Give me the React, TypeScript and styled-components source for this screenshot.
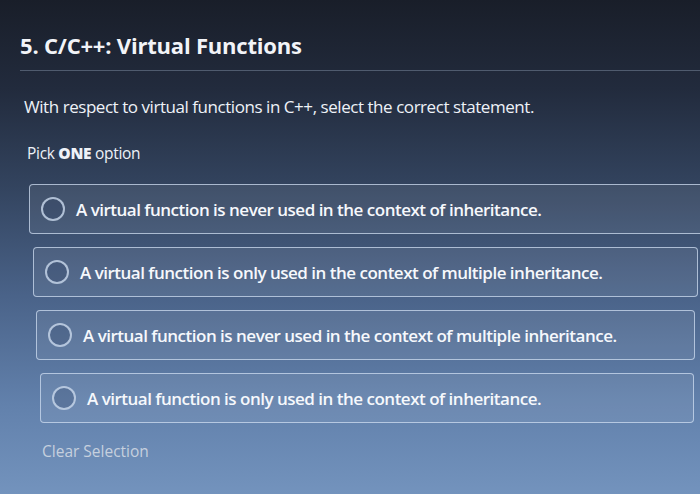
import { FC } from "react";
import styled, { createGlobalStyle } from "styled-components";

const GlobalStyle = createGlobalStyle`
  html, body {
    margin: 0;
    padding: 0;
    background: #1b202c;
  }
`;

interface IOption {
  text: string;
  left: number;
  right: number;
}

const options: IOption[] = [
  { text: "A virtual function is never used in the context of inheritance.", left: 29, right: -4 },
  { text: "A virtual function is only used in the context of multiple inheritance.", left: 33, right: 2 },
  { text: "A virtual function is never used in the context of multiple inheritance.", left: 36, right: 5 },
  { text: "A virtual function is only used in the context of inheritance.", left: 40, right: 6 },
];

export const App: FC = () => {
  return (
    <>
      <GlobalStyle />
      <ScreenDiv>
        <TitleH2>5. C/C++: Virtual Functions</TitleH2>
        <DividerDiv />
        <QuestionP>
          With respect to virtual functions in C++, select the correct statement.
        </QuestionP>
        <PickP>
          Pick <b>ONE</b> option
        </PickP>
        <OptionsDiv>
          {options.map((option) => (
            <OptionLabel key={option.text} $left={option.left} $right={option.right}>
              <RadioSpan />
              <span>{option.text}</span>
            </OptionLabel>
          ))}
        </OptionsDiv>
        <ClearDiv>Clear Selection</ClearDiv>
      </ScreenDiv>
    </>
  );
};

export default App;

const ScreenDiv = styled.div`
  width: 700px;
  height: 494px;
  overflow: hidden;
  box-sizing: border-box;
  padding-top: 30px;
  font-family: "Open Sans", "Noto Sans", sans-serif;
  color: #f4f6fa;
  background: linear-gradient(
    180deg,
    #191e29 0%,
    #222b3d 18%,
    #33445f 38%,
    #4a6389 60%,
    #6281ac 82%,
    #7393bd 100%
  );
`;

const TitleH2 = styled.h2`
  margin: 0 0 0 20px;
  font-size: 22px;
  font-weight: 700;
  letter-spacing: -0.2px;
  line-height: 30px;
  color: #f2f4f8;
`;

const DividerDiv = styled.div`
  height: 1px;
  margin: 10px 0 0 20px;
  background: rgba(170, 185, 210, 0.35);
`;

const QuestionP = styled.p`
  margin: 25px 0 0 24px;
  font-size: 17px;
  line-height: 22px;
  letter-spacing: -0.45px;
  color: #eef2f8;
`;

const PickP = styled.p`
  margin: 25px 0 0 27px;
  font-size: 15.5px;
  font-weight: 500;
  line-height: 20px;
  letter-spacing: -0.3px;
  color: #eef2f8;
  & b {
    font-weight: 800;
  }
`;

const OptionsDiv = styled.div`
  display: flex;
  flex-direction: column;
  gap: 13px;
  margin-top: 21px;
`;

const OptionLabel = styled.label<{ $left: number; $right: number }>`
  display: flex;
  align-items: center;
  gap: 11px;
  box-sizing: border-box;
  height: 50px;
  margin-left: ${(p) => p.$left}px;
  margin-right: ${(p) => p.$right}px;
  padding-left: 11px;
  border: 1.5px solid rgba(205, 220, 240, 0.75);
  border-radius: 4px;
  background: rgba(255, 255, 255, 0.07);
  font-size: 17px;
  font-weight: 600;
  letter-spacing: -0.5px;
  color: #f6f8fc;
`;

const RadioSpan = styled.span`
  width: 24px;
  height: 24px;
  flex-shrink: 0;
  box-sizing: border-box;
  border: 2px solid rgba(205, 220, 240, 0.8);
  border-radius: 50%;
  background: rgba(40, 60, 95, 0.25);
`;

const ClearDiv = styled.div`
  margin: 17px 0 0 42px;
  font-size: 15.5px;
  letter-spacing: 0;
  color: #c6d0de;
`;
